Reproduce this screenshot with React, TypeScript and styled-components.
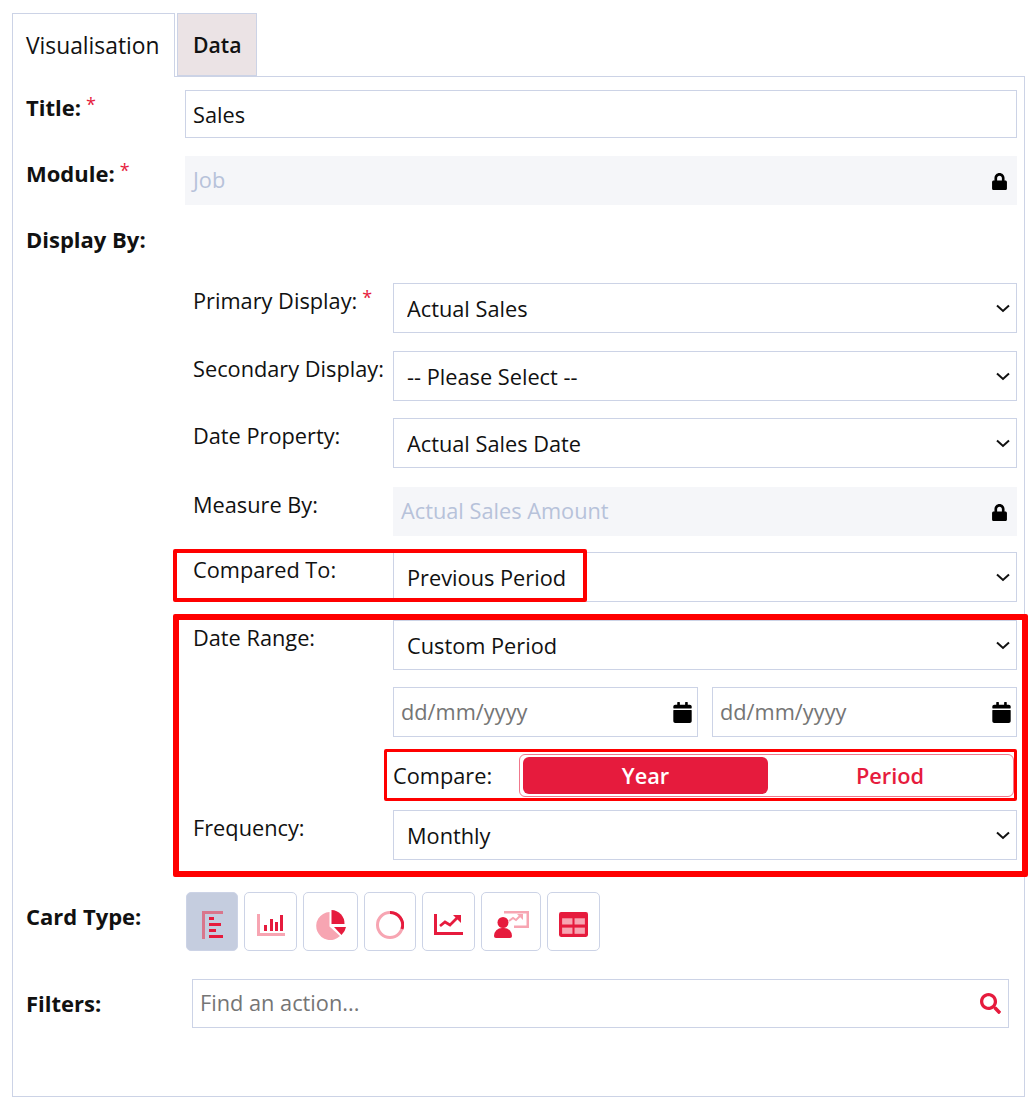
import React from 'react';
import styled, { createGlobalStyle } from 'styled-components';
import { FaCalendar, FaLock, FaSearch } from 'react-icons/fa';

const RED = '#e61b3d';
const PINK = '#f7a5b2';
const LINE = '#ccd3e6';

const chevron =
  "data:image/svg+xml,%3Csvg xmlns='http://www.w3.org/2000/svg' width='14' height='9' viewBox='0 0 14 9'%3E%3Cpath d='M1 1.500l6 5.500 6-5.500' fill='none' stroke='%23111' stroke-width='2'/%3E%3C/svg%3E";

const GlobalStyle = createGlobalStyle`
  html, body {
    margin: 0;
    background: #fff;
  }
  body {
    font-family: "Open Sans", "Noto Sans", sans-serif;
    font-size: 21.75px;
    color: #111;
  }
  * {
    box-sizing: border-box;
  }
`;

const Page = styled.div`
  position: relative;
  width: 1032px;
  height: 1114px;
  padding: 13px 7px 17px 12px;
  display: flex;
  flex-direction: column;
`;

const Tabs = styled.div`
  display: flex;
  gap: 2px;
  height: 64px;
  position: relative;
  z-index: 1;
`;

const Tab = styled.div<{ $active?: boolean }>`
  width: ${p => (p.$active ? '163px' : '80px')};
  height: ${p => (p.$active ? '64px' : '63px')};
  padding: ${p => (p.$active ? '14px' : '13px')} 0 0 ${p => (p.$active ? '13px' : '15px')};
  font-size: ${p => (p.$active ? '22.8px' : '21.2px')};
  line-height: 36px;
  white-space: nowrap;
  border: 1px solid ${LINE};
  border-bottom: ${p => (p.$active ? 'none' : `1px solid ${LINE}`)};
  background: ${p => (p.$active ? '#fff' : '#ebe3e5')};
  font-weight: ${p => (p.$active ? 400 : 600)};
`;

const Panel = styled.div`
  flex: 1;
  margin-top: -1px;
  border: 1px solid ${LINE};
  padding: 13px 7px 0 13px;
`;

const Row = styled.div<{ $top?: number; $indent?: number }>`
  display: flex;
  align-items: flex-start;
  margin-top: ${p => p.$top ?? 0}px;
  padding-left: ${p => p.$indent ?? 0}px;
`;

const MainLabel = styled.div<{ $drop?: number; $lift?: number }>`
  width: 159px;
  flex: none;
  padding-top: ${p => p.$drop ?? 0}px;
  margin-top: ${p => -(p.$lift ?? 0)}px;
  font-weight: 700;
  font-size: 22px;
  line-height: 34px;
`;

const SubLabel = styled.div`
  width: 200px;
  flex: none;
  font-size: 21.75px;
  line-height: 35px;
`;

const Star = styled.span`
  color: ${RED};
  font-weight: 400;
  font-size: 18px;
  margin-left: 5px;
  position: relative;
  top: -5px;
`;

const TextBox = styled.input`
  flex: 1;
  min-width: 0;
  height: 48px;
  padding: 0 7px;
  border: 1px solid ${LINE};
  font: inherit;
  color: #111;
  outline: none;
`;

const Locked = styled.div`
  flex: 1;
  height: 49px;
  background: #f5f6f9;
  display: flex;
  align-items: center;
  justify-content: space-between;
  padding: 0 9.500px 2px 8px;
  color: #b7c2da;

  svg {
    color: #000;
    font-size: 17px;
    margin-bottom: -3px;
  }
`;

const Select = styled.select`
  flex: 1;
  min-width: 0;
  height: 50px;
  padding: 0 8px 0 13px;
  border: 1px solid ${LINE};
  border-radius: 0;
  appearance: none;
  background: #fff url("${chevron}") no-repeat right 6px center;
  font: inherit;
  color: #111;
  outline: none;
`;

const DateField = styled.div`
  flex: 1;
  height: 50px;
  display: flex;
  align-items: center;
  justify-content: space-between;
  padding: 0 4px 2px 7px;
  border: 1px solid ${LINE};
  color: #757575;

  svg {
    color: #000;
    font-size: 21px;
    margin-bottom: -2px;
  }
`;

const DateGroup = styled.div`
  flex: 1;
  display: flex;
  gap: 14px;
  margin-left: 200px;
`;

const CompareLabel = styled.div`
  width: 126px;
  height: 43px;
  flex: none;
  font-size: 21.75px;
  line-height: 44px;
`;

const Toggle = styled.div`
  flex: 1;
  height: 43px;
  margin-right: 3px;
  padding: 2px 3px;
  display: flex;
  border: 1px solid #f0788c;
  border-radius: 6px;
`;

const ToggleOption = styled.div<{ $active?: boolean }>`
  flex: ${p => (p.$active ? '0 0 245px' : 1)};
  display: flex;
  align-items: center;
  justify-content: center;
  padding: 0 0 1px ${p => (p.$active ? 0 : 2)}px;
  border-radius: 6px;
  font-size: 21.75px;
  font-weight: 600;
  background: ${p => (p.$active ? RED : 'transparent')};
  color: ${p => (p.$active ? '#fff' : RED)};
`;

const CardButtons = styled.div`
  display: flex;
  gap: 6px;
  margin-left: 1px;
`;

const CardButton = styled.div<{ $active?: boolean; $width: number }>`
  width: ${p => p.$width}px;
  height: 59px;
  display: flex;
  align-items: center;
  justify-content: center;
  padding-top: 6px;
  border: 1px solid ${LINE};
  border-radius: 5px;
  background: ${p => (p.$active ? '#c5cddf' : '#fff')};
`;

const SearchBox = styled.div`
  flex: 1;
  height: 49px;
  margin: 0 8px 0 7px;
  display: flex;
  align-items: center;
  justify-content: space-between;
  padding: 0 7px 3px 7px;
  border: 1px solid ${LINE};
  color: #757575;

  svg {
    color: ${RED};
    font-size: 21px;
    margin-bottom: -3px;
  }
`;

const RedFrame = styled.div<{ $x: number; $y: number; $w: number; $h: number; $line: number }>`
  position: absolute;
  left: ${p => p.$x}px;
  top: ${p => p.$y}px;
  width: ${p => p.$w}px;
  height: ${p => p.$h}px;
  border: ${p => p.$line}px solid #ff0000;
  border-radius: 2px;
  pointer-events: none;
`;

const BarsHIcon = () => (
  <svg width="21" height="28" viewBox="0 0 21 28">
    <path d="M0 0h21v3H3v25H0z" fill="#d9768c" />
    <g fill={RED}>
      <rect x="7" y="6" width="5" height="3" />
      <rect x="7" y="12" width="12" height="3" />
      <rect x="7" y="18" width="7" height="3" />
      <rect x="7" y="24" width="14" height="3" />
    </g>
  </svg>
);

const BarsVIcon = () => (
  <svg width="28" height="22" viewBox="0 0 28 22">
    <path d="M0 0h3v19h25v3H0z" fill={PINK} />
    <g fill={RED}>
      <rect x="7" y="11" width="3" height="6" />
      <rect x="13" y="5" width="3" height="12" />
      <rect x="18" y="8" width="3" height="9" />
      <rect x="23" y="1" width="3" height="16" />
    </g>
  </svg>
);

const PieIcon = () => (
  <svg width="30" height="30" viewBox="0 0 30 30">
    <path d="M13.500 2V16.500L24 26A14 14 0 1 1 13.500 2Z" fill={PINK} />
    <path d="M15.500 0A13.500 13.500 0 0 1 28.500 14H15.500Z" fill={RED} />
    <path d="M18 17H30A14 14 0 0 1 25.500 25Z" fill={RED} />
  </svg>
);

const RingIcon = () => (
  <svg width="28" height="28" viewBox="0 0 28 28" fill="none" strokeWidth="3">
    <circle cx="14" cy="14" r="12.500" stroke={PINK} />
    <path d="M14 1.500A12.500 12.500 0 0 1 26 18" stroke={RED} />
  </svg>
);

const TrendIcon = () => (
  <svg width="29" height="21" viewBox="0 0 29 21">
    <path d="M0 0h3v18h26v3H0z" fill={RED} />
    <path d="M6 12l5-4 5 3 7-7" fill="none" stroke={RED} strokeWidth="2.800" />
    <path d="M19 1h8v8z" fill={RED} />
  </svg>
);

const PresenterIcon = () => (
  <svg width="35" height="27" viewBox="0 0 35 27">
    <path d="M10 0h25v17H20v-2.500h12.500v-12H10z" fill={PINK} />
    <path d="M15 10l4-3 3 2 5-5" fill="none" stroke={PINK} strokeWidth="2" />
    <path d="M23 3h6v6z" fill={PINK} />
    <circle cx="9" cy="11.500" r="5.500" fill={RED} />
    <path d="M0 25a8 8 0 0 1 8-8h2a8 8 0 0 1 8 8a2 2 0 0 1-2 2H2a2 2 0 0 1-2-2z" fill={RED} />
  </svg>
);

const TableIcon = () => (
  <svg width="29" height="25" viewBox="0 0 28 24">
    <rect width="28" height="24" rx="2" fill={RED} />
    <g fill={PINK}>
      <rect x="3" y="6" width="10" height="6" />
      <rect x="15" y="6" width="10" height="6" />
      <rect x="3" y="15" width="10" height="6" />
      <rect x="15" y="15" width="10" height="6" />
    </g>
  </svg>
);

const cards = [
  { width: 52, icon: <BarsHIcon />, active: true },
  { width: 53, icon: <BarsVIcon /> },
  { width: 55, icon: <PieIcon /> },
  { width: 52, icon: <RingIcon /> },
  { width: 53, icon: <TrendIcon /> },
  { width: 60, icon: <PresenterIcon /> },
  { width: 53, icon: <TableIcon /> }
];

const App: React.FC = () => {
  return (
    <Page>
      <GlobalStyle />
      <Tabs>
        <Tab $active>Visualisation</Tab>
        <Tab>Data</Tab>
      </Tabs>
      <Panel>
        <Row>
          <MainLabel>
            Title:<Star>*</Star>
          </MainLabel>
          <TextBox defaultValue="Sales" />
        </Row>
        <Row $top={18}>
          <MainLabel>
            Module:<Star>*</Star>
          </MainLabel>
          <Locked>
            Job
            <FaLock />
          </Locked>
        </Row>
        <Row $top={18}>
          <MainLabel $lift={1}>Display By:</MainLabel>
        </Row>

        <Row $top={27} $indent={167}>
          <SubLabel>
            Primary Display:<Star>*</Star>
          </SubLabel>
          <Select defaultValue="Actual Sales">
            <option>Actual Sales</option>
          </Select>
        </Row>
        <Row $top={18} $indent={167}>
          <SubLabel>Secondary Display:</SubLabel>
          <Select defaultValue="-- Please Select --">
            <option>-- Please Select --</option>
          </Select>
        </Row>
        <Row $top={17} $indent={167}>
          <SubLabel>Date Property:</SubLabel>
          <Select defaultValue="Actual Sales Date">
            <option>Actual Sales Date</option>
          </Select>
        </Row>
        <Row $top={19} $indent={167}>
          <SubLabel>Measure By:</SubLabel>
          <Locked>
            Actual Sales Amount
            <FaLock />
          </Locked>
        </Row>
        <Row $top={16} $indent={167}>
          <SubLabel>Compared To:</SubLabel>
          <Select defaultValue="Previous Period">
            <option>Previous Period</option>
          </Select>
        </Row>
        <Row $top={18} $indent={167}>
          <SubLabel>Date Range:</SubLabel>
          <Select defaultValue="Custom Period">
            <option>Custom Period</option>
          </Select>
        </Row>
        <Row $top={17} $indent={167}>
          <DateGroup>
            <DateField>
              dd/mm/yyyy
              <FaCalendar />
            </DateField>
            <DateField>
              dd/mm/yyyy
              <FaCalendar />
            </DateField>
          </DateGroup>
        </Row>
        <Row $top={17} $indent={367}>
          <CompareLabel>Compare:</CompareLabel>
          <Toggle>
            <ToggleOption $active>Year</ToggleOption>
            <ToggleOption>Period</ToggleOption>
          </Toggle>
        </Row>
        <Row $top={13} $indent={167}>
          <SubLabel>Frequency:</SubLabel>
          <Select defaultValue="Monthly">
            <option>Monthly</option>
          </Select>
        </Row>

        <Row $top={32}>
          <MainLabel $drop={7}>Card Type:</MainLabel>
          <CardButtons>
            {cards.map((card, i) => (
              <CardButton key={i} $width={card.width} $active={card.active}>
                {card.icon}
              </CardButton>
            ))}
          </CardButtons>
        </Row>
        <Row $top={28}>
          <MainLabel $drop={7}>Filters:</MainLabel>
          <SearchBox>
            Find an action...
            <FaSearch />
          </SearchBox>
        </Row>
      </Panel>

      <RedFrame $x={173} $y={549} $w={414} $h={53} $line={4} />
      <RedFrame $x={173} $y={614} $w={855} $h={263} $line={6} />
      <RedFrame $x={384} $y={749} $w={633} $h={52} $line={3} />
    </Page>
  );
};

export default App;
